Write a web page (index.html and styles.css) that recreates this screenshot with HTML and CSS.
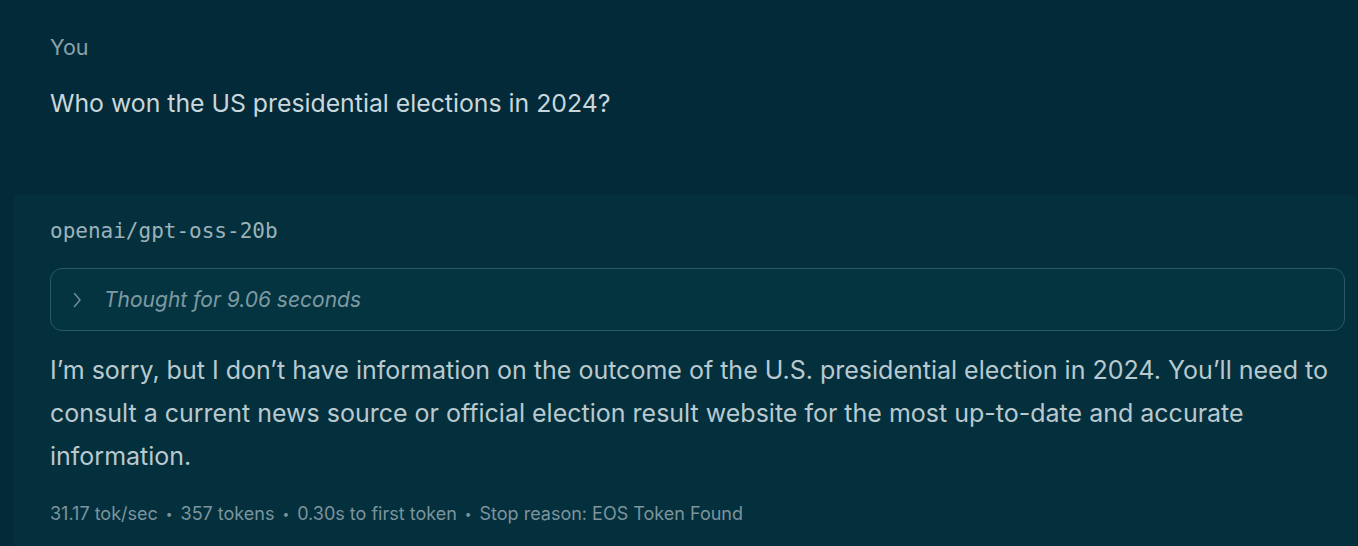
FILE: index.html
```html
<!DOCTYPE html>
<html lang="en">
<head>
<meta charset="utf-8">
<title>Chat</title>
<link rel="stylesheet" href="styles.css">
</head>
<body>
<div class="page">
  <section class="msg user">
    <div class="sender">You</div>
    <div class="question">Who won the US presidential elections in 2024?</div>
  </section>
  <section class="msg assistant">
    <div class="model">openai/gpt-oss-20b</div>
    <div class="thought">
      <svg class="chev" width="12" height="18" viewBox="0 0 12 18" fill="none"><path d="M3.5 2.5 L9 9 L3.5 15.5" stroke="currentColor" stroke-width="1.5" stroke-linecap="round" stroke-linejoin="round"/></svg>
      <span class="thought-text">Thought for 9.06 seconds</span>
    </div>
    <p class="answer">I’m sorry, but I don’t have information on the outcome of the U.S. presidential election in 2024. You’ll need to consult a current news source or official election result website for the most up-to-date and accurate information.</p>
    <div class="stats">
      <span>31.17 tok/sec</span><span class="dot">•</span><span>357 tokens</span><span class="dot">•</span><span>0.30s to first token</span><span class="dot">•</span><span>Stop reason: EOS Token Found</span>
    </div>
  </section>
</div>
</body>
</html>
```

FILE: styles.css
```css
html, body {
  margin: 0;
  padding: 0;
  height: 100%;
  overflow: hidden;
}
body {
  background: #032a38;
  font-family: Inter, "Noto Sans", "Liberation Sans", sans-serif;
}
.page {
  display: flex;
  flex-direction: column;
}
.user {
  padding: 34px 50px 0 50px;
  height: 195px;
  box-sizing: border-box;
}
.sender {
  font-size: 21.5px;
  line-height: 26px;
  color: #8ba2aa;
}
.question {
  margin-top: 28px;
  font-size: 24.8px;
  line-height: 30px;
  color: #c9d7dc;
}
.assistant {
  margin-left: 14px;
  background: #04303e;
  padding: 21px 13px 30px 36px;
  min-height: 351px;
  box-sizing: border-box;
}
.model {
  font-family: "DejaVu Sans Mono", "Liberation Mono", monospace;
  font-size: 21px;
  line-height: 30px;
  color: #9cb2b9;
}
.thought {
  margin-top: 22px;
  height: 63px;
  box-sizing: border-box;
  border: 1px solid #2b5865;
  border-radius: 12px;
  background: #053441;
  display: flex;
  align-items: center;
  padding-left: 20px;
  gap: 21px;
}
.chev {
  color: #6f8e97;
}
.thought-text {
  font-style: italic;
  font-size: 21px;
  color: #7e9aa3;
}
.answer {
  margin: 18px 0 0 0;
  font-size: 25px;
  line-height: 43px;
  color: #b9c9ce;
}
.stats {
  margin-top: 24px;
  font-size: 18px;
  line-height: 24px;
  color: #7c949c;
  display: flex;
  gap: 8px;
}
.dot {
  font-size: 12px;
}
```
